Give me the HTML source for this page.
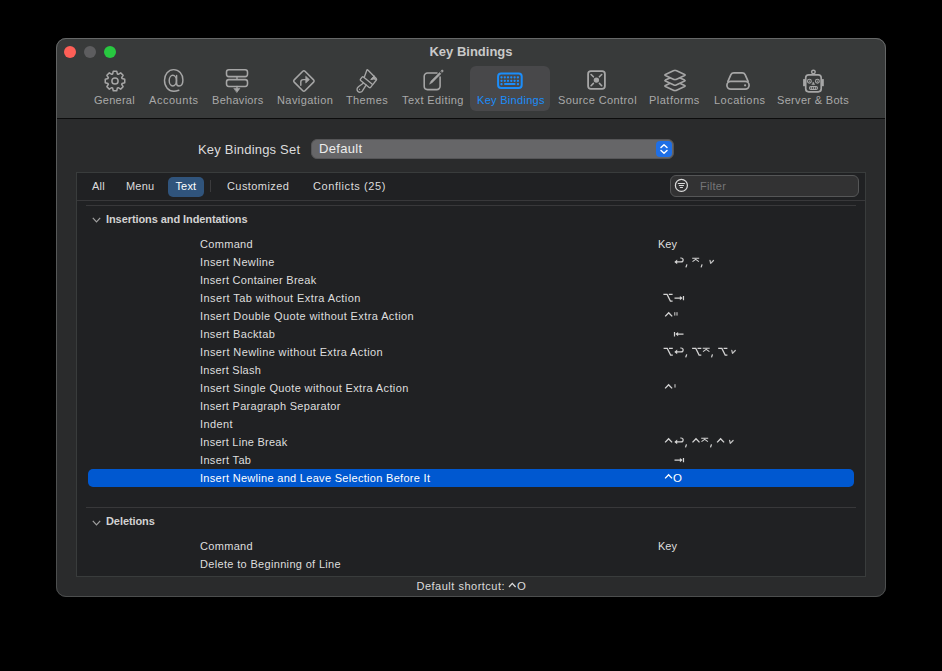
<!DOCTYPE html>
<html><head><meta charset="utf-8">
<style>
*{margin:0;padding:0;box-sizing:border-box}
html,body{width:942px;height:671px;background:#000;overflow:hidden;font-family:"Liberation Sans",sans-serif}
.a{position:absolute;white-space:nowrap}
#win{position:absolute;left:56px;top:38px;width:830px;height:559px;border-radius:10px;background:#2a2b2c;overflow:hidden}
#tb{position:absolute;left:56px;top:38px;width:830px;height:81px;background:#383a3a;border-bottom:1px solid #0c0c0c;border-radius:10px 10px 0 0}
#bord{position:absolute;left:56px;top:38px;width:830px;height:559px;border-radius:10px;border:1px solid #626464}
.lbl{position:absolute;top:94px;font-size:11px;color:#a9a9a9;letter-spacing:0.15px;line-height:13px;white-space:nowrap}
svg{position:absolute;overflow:visible}
.row{position:absolute;left:200px;font-size:11px;color:#dedede;letter-spacing:0.25px;line-height:13px;white-space:nowrap}
.key{position:absolute;font-size:11px;color:#dedede;line-height:13px;white-space:nowrap}
#box{position:absolute;left:76px;top:172px;width:790px;height:405px;background:#202123;border:1px solid #393c3c}
#list{position:absolute;left:77px;top:202px;width:788px;height:374px;overflow:hidden}
.hdr{position:absolute;left:106px;font-size:11px;font-weight:bold;letter-spacing:-0.08px;color:#d2d2d2;line-height:13px;white-space:nowrap}
.sep{position:absolute;height:1px;background:#38383a}
.seg{position:absolute;top:180px;font-size:11px;color:#dcdcdc;letter-spacing:0.2px;line-height:13px;white-space:nowrap}
</style></head><body>
<div id="win"></div>
<div id="tb"></div>
<svg style="left:0;top:0" width="942" height="671" viewBox="0 0 942 671"><defs><linearGradient id="bg1" x1="0" y1="38" x2="0" y2="597" gradientUnits="userSpaceOnUse"><stop offset="0" stop-color="#666868"/><stop offset="0.15" stop-color="#5a5c5c"/><stop offset="1" stop-color="#4c4e4e"/></linearGradient></defs><rect x="56.5" y="38.5" width="829" height="558" rx="9.5" fill="none" stroke="url(#bg1)" stroke-width="1"/></svg>

<!-- traffic lights -->
<div class="a" style="left:64px;top:46px;width:12px;height:12px;border-radius:6px;background:#fe5f57"></div>
<div class="a" style="left:84px;top:46px;width:12px;height:12px;border-radius:6px;background:#5d5d5f"></div>
<div class="a" style="left:104px;top:46px;width:12px;height:12px;border-radius:6px;background:#28c840"></div>
<div class="a" style="left:56px;top:44px;width:830px;text-align:center;font-size:13px;font-weight:bold;color:#c9c9c9;line-height:15px">Key Bindings</div>

<!-- selected tab bg -->
<div class="a" style="left:470px;top:66px;width:80px;height:45px;border-radius:6px;background:#48484a"></div>

<svg style="left:0;top:0" width="942" height="120" viewBox="0 0 942 120">
<g fill="none" stroke="#a6a6a6" stroke-width="1.35" stroke-linejoin="round" stroke-linecap="round">
<!-- gear -->
<path d="M112.59 74.00 L113.28 71.25 L116.72 71.25 L117.41 74.00 A7.4 7.4 0 0 1 118.24 74.35 L120.68 72.89 L123.11 75.32 L121.65 77.76 A7.4 7.4 0 0 1 122.00 78.59 L124.75 79.28 L124.75 82.72 L122.00 83.41 A7.4 7.4 0 0 1 121.65 84.24 L123.11 86.68 L120.68 89.11 L118.24 87.65 A7.4 7.4 0 0 1 117.41 88.00 L116.72 90.75 L113.28 90.75 L112.59 88.00 A7.4 7.4 0 0 1 111.76 87.65 L109.32 89.11 L106.89 86.68 L108.35 84.24 A7.4 7.4 0 0 1 108.00 83.41 L105.25 82.72 L105.25 79.28 L108.00 78.59 A7.4 7.4 0 0 1 108.35 77.76 L106.89 75.32 L109.32 72.89 L111.76 74.35 A7.4 7.4 0 0 1 112.59 74.00Z" stroke-width="1.5"/>
<circle cx="115" cy="81" r="3.1" stroke-width="1.5"/>
<!-- @ -->
<g transform="translate(160 67)" stroke-width="1.45">
<ellipse cx="12.8" cy="13.6" rx="3.6" ry="5.3"/>
<path d="M16.6 8.4 V16.2 C16.6 18.2 17.7 19 19 19 C21.3 19 22.9 16.8 22.9 13 C22.9 7 18.8 2.6 13.7 2.6 C8.3 2.6 4.5 7.3 4.5 13.3 C4.5 19.8 8.6 24.2 13.8 24.2 C15.8 24.2 17.3 23.8 18.8 23.3"/>
</g>
<!-- behaviors -->
<rect x="226.5" y="69.8" width="21" height="6.8" rx="2.3" stroke-width="1.55"/>
<rect x="226.5" y="79.6" width="21" height="6.8" rx="2.3" stroke-width="1.55"/>
<path d="M237 76.6 V79.4 M237 86.4 V89" stroke-width="1.4"/>
<path d="M234.2 88.4 L239.8 88.4 L237 92.2 Z" fill="#a6a6a6" stroke-width="0.7"/>
<!-- navigation -->
<path d="M302.8 71.3 Q303.9 70.2 305 71.3 L313.6 79.9 Q314.7 81 313.6 82.1 L305 90.7 Q303.9 91.8 302.8 90.7 L294.2 82.1 Q293.1 81 294.2 79.9 Z" stroke-width="1.55"/>
<path d="M300.8 85.3 V82 C300.8 80.5 301.8 79.6 303.2 79.6 H306.5" stroke-width="1.45"/>
<path d="M306 76.5 L309.4 79.6 L306 82.7 Z" fill="#a6a6a6" stroke-width="0.8"/>
<!-- themes brush -->
<g transform="translate(362.7 76.4) rotate(39)">
<rect x="0" y="0" width="13" height="4.5" rx="1"/>
<path d="M1.9 0 L-0.7 -7.4 Q-1 -8.4 0 -8.2 L11.8 -6.9 Q12.8 -6.8 12.9 -5.8 L13 0"/>
<path d="M8.6 -7.5 Q8.1 -4.3 8.3 -2.6 Q9.8 -5 12.4 -6.2" fill="#a6a6a6" stroke-width="0.9"/>
<path d="M4.5 4.5 V5.8 L3.2 10.8 A2.95 2.95 0 1 0 8.9 11.2 L8.2 5.8 V4.5"/>
<circle cx="5.7" cy="12" r="0.6" fill="#a6a6a6" stroke="none"/>
</g>
<!-- text editing -->
<path d="M437 73 H427.5 A3.3 3.3 0 0 0 424.2 76.3 V86.3 A3.3 3.3 0 0 0 427.5 89.6 H436.8 A3.3 3.3 0 0 0 440.1 86.3 V77" stroke-width="1.55"/>
<path d="M429.6 83.9 L431 81 L439.6 72.4 L441 73.8 L432.4 82.4 Z" fill="#a6a6a6" stroke-width="0.5"/>
<path d="M441 71 L442.2 69.8 L443.4 71 L442.2 72.2 Z" fill="#a6a6a6" stroke-width="0.6"/>
<!-- source control -->
<rect x="588.1" y="71.1" width="16.8" height="17.8" rx="2.8" stroke-width="1.8"/>
<circle cx="596.4" cy="80.1" r="2.7" fill="#a6a6a6" stroke="none"/>
<path d="M591.1 74.5 L593.4 76.8 M601.7 74.5 L599.4 76.8 M591.1 85.7 L593.4 83.4 M601.7 85.7 L599.4 83.4" stroke-width="1.6"/>
<!-- platforms -->
<path d="M673.9 81.60 Q675 81.05 676.1 81.60 L684.6 85.50 Q685.6 86.00 684.6 86.50 L676.1 90.40 Q675 90.95 673.9 90.40 L665.4 86.50 Q664.4 86.00 665.4 85.50 Z" fill="#38383a" stroke-width="1.6"/>
<path d="M673.9 76.20 Q675 75.65 676.1 76.20 L684.6 80.10 Q685.6 80.60 684.6 81.10 L676.1 85.00 Q675 85.55 673.9 85.00 L665.4 81.10 Q664.4 80.60 665.4 80.10 Z" fill="#38383a" stroke-width="1.6"/>
<path d="M673.9 70.60 Q675 70.05 676.1 70.60 L684.6 74.50 Q685.6 75.00 684.6 75.50 L676.1 79.40 Q675 79.95 673.9 79.40 L665.4 75.50 Q664.4 75.00 665.4 74.50 Z" fill="#38383a" stroke-width="1.6"/>
<!-- locations -->
<path d="M727.9 81.4 L730.9 74.7 Q731.8 72.8 733.8 72.8 H742.2 Q744.2 72.8 745.1 74.7 L748.1 81.4" stroke-width="1.7"/>
<rect x="726.9" y="81.4" width="22.2" height="7.8" rx="3.9" stroke-width="1.7"/>
<circle cx="745.1" cy="85.3" r="1.1" fill="#a6a6a6" stroke="none"/>
<!-- robot -->
<rect x="805.7" y="74.8" width="15.5" height="17" rx="3" stroke-width="1.7"/>
<circle cx="813.4" cy="72" r="1.8" stroke-width="1.4"/>
<rect x="803.1" y="79.1" width="1.9" height="7.1" fill="#a6a6a6" stroke="none"/>
<rect x="821.9" y="79.1" width="1.9" height="7.1" fill="#a6a6a6" stroke="none"/>
<circle cx="809.4" cy="81.2" r="1.9" stroke-width="1.1"/>
<circle cx="817.4" cy="81.2" r="1.9" stroke-width="1.1"/>
<circle cx="809.4" cy="81.2" r="0.6" fill="#a6a6a6" stroke="none"/>
<circle cx="817.4" cy="81.2" r="0.6" fill="#a6a6a6" stroke="none"/>
<path d="M813.4 82.3 L814.6 84.6 H812.2 Z" fill="#a6a6a6" stroke-width="0.6"/>
<rect x="809.5" y="86.6" width="8" height="2.8" rx="1.4" stroke-width="1.1"/>
<path d="M811.5 86.8 V89.2 M813.5 86.8 V89.2 M815.5 86.8 V89.2" stroke-width="0.8"/>
</g>
<!-- keyboard blue -->
<g fill="none" stroke="#1b8dfa" stroke-width="2">
<rect x="498.1" y="73.6" width="23.6" height="14.4" rx="3"/>
</g>
<g fill="#1b8dfa"><rect x="500.40" y="76.20" width="2.2" height="2.2" rx="0.8"/><rect x="503.70" y="76.20" width="2.2" height="2.2" rx="0.8"/><rect x="506.90" y="76.20" width="2.2" height="2.2" rx="0.8"/><rect x="510.20" y="76.20" width="2.2" height="2.2" rx="0.8"/><rect x="513.50" y="76.20" width="2.2" height="2.2" rx="0.8"/><rect x="516.80" y="76.20" width="2.2" height="2.2" rx="0.8"/><rect x="500.40" y="79.70" width="2.2" height="2.2" rx="0.8"/><rect x="503.70" y="79.70" width="2.2" height="2.2" rx="0.8"/><rect x="506.90" y="79.70" width="2.2" height="2.2" rx="0.8"/><rect x="510.20" y="79.70" width="2.2" height="2.2" rx="0.8"/><rect x="513.50" y="79.70" width="2.2" height="2.2" rx="0.8"/><rect x="516.80" y="79.70" width="2.2" height="2.2" rx="0.8"/><rect x="500.4" y="83.0" width="2.2" height="2.2" rx="0.8"/><rect x="504" y="83.1" width="11.6" height="2" rx="1"/><rect x="516.8" y="83.0" width="2.2" height="2.2" rx="0.8"/></g>
</svg>

<!-- toolbar labels -->
<div class="lbl" style="left:94px;letter-spacing:0.25px">General</div>
<div class="lbl" style="left:149px;letter-spacing:0.54px">Accounts</div>
<div class="lbl" style="left:212px;letter-spacing:0.29px">Behaviors</div>
<div class="lbl" style="left:277px;letter-spacing:0.43px">Navigation</div>
<div class="lbl" style="left:346px;letter-spacing:0.39px">Themes</div>
<div class="lbl" style="left:402px;letter-spacing:0.42px">Text Editing</div>
<div class="lbl" style="left:477px;color:#1b8dfa;letter-spacing:0.30px">Key Bindings</div>
<div class="lbl" style="left:558px;letter-spacing:0.40px">Source Control</div>
<div class="lbl" style="left:649px;letter-spacing:0.49px">Platforms</div>
<div class="lbl" style="left:714px;letter-spacing:0.49px">Locations</div>
<div class="lbl" style="left:777px;letter-spacing:0.32px">Server &amp; Bots</div>

<!-- popup -->
<div class="a" style="left:198px;top:142px;font-size:13px;color:#dcdcdc;letter-spacing:0.2px;line-height:15px">Key Bindings Set</div>
<div class="a" style="left:311px;top:139px;width:363px;height:20px;border-radius:6px;background:#666668;border:1px solid #555557"></div>
<div class="a" style="left:319px;top:141px;font-size:13px;color:#ececec;letter-spacing:0.3px;line-height:15px">Default</div>
<div class="a" style="left:656px;top:141px;width:16px;height:16px;border-radius:4px;background:#1f6fe6"></div>
<svg style="left:656px;top:141px" width="16" height="16" viewBox="0 0 16 16"><path d="M5 6.5 L8 3.8 L11 6.5 M5 9.5 L8 12.2 L11 9.5" fill="none" stroke="#fff" stroke-width="1.5" stroke-linecap="round" stroke-linejoin="round"/></svg>

<!-- table box -->
<div id="box"></div>
<div class="sep" style="left:77px;top:200px;width:788px;background:#38383a"></div>
<div class="seg" style="left:92px">All</div>
<div class="seg" style="left:126px">Menu</div>
<div class="a" style="left:168px;top:177px;width:36px;height:20px;border-radius:5px;background:#30547c"></div>
<div class="seg" style="left:175.4px;color:#ffffff">Text</div>
<div class="a" style="left:210px;top:180px;width:1px;height:12px;background:#3b3b3d"></div>
<div class="seg" style="left:227px;letter-spacing:0.42px">Customized</div>
<div class="seg" style="left:313px;letter-spacing:0.58px">Conflicts (25)</div>
<div class="a" style="left:670px;top:175px;width:189px;height:22px;border-radius:6px;background:#323233;border:1px solid #555657"></div>
<svg style="left:0;top:0" width="942" height="671" viewBox="0 0 942 671"><circle cx="681.4" cy="185.4" r="6" fill="none" stroke="#dadada" stroke-width="1.25"/><path d="M678.3 183.5 H684.5 M679.3 185.5 H683.5 M680.3 187.5 H682.5" stroke="#dadada" stroke-width="1.15" stroke-linecap="round"/></svg>
<div class="a" style="left:700px;top:180px;font-size:11px;color:#767678;letter-spacing:0.3px;line-height:13px">Filter</div>

<div id="list">
</div>
<!-- list content in page coords -->
<div class="sep" style="left:86px;top:205px;width:770px"></div>
<svg style="left:92px;top:217px" width="9" height="6" viewBox="0 0 9 6"><path d="M0.8 0.8 L4.5 4.8 L8.2 0.8" fill="none" stroke="#a0a0a0" stroke-width="1.2"/></svg>
<div class="hdr" style="top:213px">Insertions and Indentations</div>

<div class="row" style="top:238px;letter-spacing:0.32px">Command</div>
<div class="key" style="left:658px;top:238px">Key</div>
<div class="row" style="top:256px;letter-spacing:0.36px">Insert Newline</div>
<div class="row" style="top:274px;letter-spacing:0.29px">Insert Container Break</div>
<div class="row" style="top:292px;letter-spacing:0.42px">Insert Tab without Extra Action</div>
<div class="row" style="top:310px;letter-spacing:0.40px">Insert Double Quote without Extra Action</div>
<div class="row" style="top:328px;letter-spacing:0.35px">Insert Backtab</div>
<div class="row" style="top:346px;letter-spacing:0.39px">Insert Newline without Extra Action</div>
<div class="row" style="top:364px;letter-spacing:0.25px">Insert Slash</div>
<div class="row" style="top:382px;letter-spacing:0.37px">Insert Single Quote without Extra Action</div>
<div class="row" style="top:400px;letter-spacing:0.28px">Insert Paragraph Separator</div>
<div class="row" style="top:418px;letter-spacing:0.41px">Indent</div>
<div class="row" style="top:436px;letter-spacing:0.25px">Insert Line Break</div>
<div class="row" style="top:454px;letter-spacing:0.32px">Insert Tab</div>
<div class="a" style="left:88px;top:469px;width:766px;height:18px;border-radius:5px;background:#0058d0"></div>
<div class="row" style="top:472px;color:#fff;letter-spacing:0.30px">Insert Newline and Leave Selection Before It</div>
<div class="key" style="left:673px;top:472px;color:#fff;font-size:11.5px">O</div>

<!-- KEYS --><svg style="left:0;top:0" width="942" height="671" viewBox="0 0 942 671">
<path d="M676.50 261.90 H680.90 C683.90 261.90 683.90 258.00 680.90 258.00 H680.30" fill="none" stroke="#d4d4d4" stroke-width="1.2"/><path d="M674.30 261.90 L677.20 259.50 V264.30 Z" fill="#d4d4d4"/>
<path d="M686.90 264.40 L685.90 267.40" fill="none" stroke="#d4d4d4" stroke-width="1.25"/>
<path d="M692.20 258.30 H699.20 M692.50 261.60 L695.70 259.40 L698.90 261.60" fill="none" stroke="#d4d4d4" stroke-width="1.1"/>
<path d="M702.10 264.40 L701.10 267.40" fill="none" stroke="#d4d4d4" stroke-width="1.25"/>
<path d="M710.00 260.40 L710.70 263.40 L713.50 260.50" fill="none" stroke="#c0c0c0" stroke-width="1.25" stroke-linecap="round" stroke-linejoin="round"/>
<path d="M663.40 294.40 H667.10 L670.40 301.00 H672.60 M668.80 294.40 H672.60" fill="none" stroke="#d4d4d4" stroke-width="1.25"/>
<path d="M674.50 298.10 H680.80 M683.50 296.00 V300.30" fill="none" stroke="#d4d4d4" stroke-width="1.2"/><path d="M682.70 298.10 L679.90 296.00 V300.20 Z" fill="#d4d4d4"/>
<path d="M665.20 316.40 L668.70 312.80 L672.20 316.40" fill="none" stroke="#d4d4d4" stroke-width="1.35"/>
<path d="M674.80 312.20 V315.60 M677.00 312.20 V315.60" fill="none" stroke="#d4d4d4" stroke-width="1.0"/>
<path d="M683.50 334.10 H677.20 M674.50 331.90 V336.40" fill="none" stroke="#d4d4d4" stroke-width="1.2"/><path d="M675.30 334.10 L678.10 332.00 V336.20 Z" fill="#d4d4d4"/>
<path d="M663.60 348.40 H667.30 L670.60 355.00 H672.80 M669.00 348.40 H672.80" fill="none" stroke="#d4d4d4" stroke-width="1.25"/>
<path d="M676.50 351.90 H680.90 C683.90 351.90 683.90 348.00 680.90 348.00 H680.30" fill="none" stroke="#d4d4d4" stroke-width="1.2"/><path d="M674.30 351.90 L677.20 349.50 V354.30 Z" fill="#d4d4d4"/>
<path d="M686.70 354.40 L685.70 357.40" fill="none" stroke="#d4d4d4" stroke-width="1.25"/>
<path d="M692.10 348.40 H695.80 L699.10 355.00 H701.30 M697.50 348.40 H701.30" fill="none" stroke="#d4d4d4" stroke-width="1.25"/>
<path d="M702.70 348.30 H709.70 M703.00 351.60 L706.20 349.40 L709.40 351.60" fill="none" stroke="#d4d4d4" stroke-width="1.1"/>
<path d="M712.50 354.40 L711.50 357.40" fill="none" stroke="#d4d4d4" stroke-width="1.25"/>
<path d="M718.20 348.40 H721.90 L725.20 355.00 H727.40 M723.60 348.40 H727.40" fill="none" stroke="#d4d4d4" stroke-width="1.25"/>
<path d="M731.80 350.40 L732.50 353.40 L735.30 350.50" fill="none" stroke="#c0c0c0" stroke-width="1.25" stroke-linecap="round" stroke-linejoin="round"/>
<path d="M665.10 388.40 L668.60 384.80 L672.10 388.40" fill="none" stroke="#d4d4d4" stroke-width="1.35"/>
<path d="M675.00 384.20 V387.60" fill="none" stroke="#d4d4d4" stroke-width="1.0"/>
<path d="M665.10 442.40 L668.60 438.80 L672.10 442.40" fill="none" stroke="#d4d4d4" stroke-width="1.35"/>
<path d="M676.50 441.90 H680.90 C683.90 441.90 683.90 438.00 680.90 438.00 H680.30" fill="none" stroke="#d4d4d4" stroke-width="1.2"/><path d="M674.30 441.90 L677.20 439.50 V444.30 Z" fill="#d4d4d4"/>
<path d="M686.50 444.40 L685.50 447.40" fill="none" stroke="#d4d4d4" stroke-width="1.25"/>
<path d="M692.50 442.40 L696.00 438.80 L699.50 442.40" fill="none" stroke="#d4d4d4" stroke-width="1.35"/>
<path d="M701.20 438.30 H708.20 M701.50 441.60 L704.70 439.40 L707.90 441.60" fill="none" stroke="#d4d4d4" stroke-width="1.1"/>
<path d="M711.50 444.40 L710.50 447.40" fill="none" stroke="#d4d4d4" stroke-width="1.25"/>
<path d="M717.10 442.40 L720.60 438.80 L724.10 442.40" fill="none" stroke="#d4d4d4" stroke-width="1.35"/>
<path d="M729.60 440.40 L730.30 443.40 L733.10 440.50" fill="none" stroke="#c0c0c0" stroke-width="1.25" stroke-linecap="round" stroke-linejoin="round"/>
<path d="M674.50 460.10 H680.80 M683.50 458.00 V462.30" fill="none" stroke="#d4d4d4" stroke-width="1.2"/><path d="M682.70 460.10 L679.90 458.00 V462.20 Z" fill="#d4d4d4"/>
<path d="M665.10 478.40 L668.60 474.80 L672.10 478.40" fill="none" stroke="#ffffff" stroke-width="1.35"/>
</svg><!-- /KEYS -->
<div class="sep" style="left:86px;top:507px;width:770px"></div>
<svg style="left:92px;top:520px" width="9" height="6" viewBox="0 0 9 6"><path d="M0.8 0.8 L4.5 4.8 L8.2 0.8" fill="none" stroke="#a0a0a0" stroke-width="1.2"/></svg>
<div class="hdr" style="top:515px">Deletions</div>
<div class="row" style="top:540px;letter-spacing:0.32px">Command</div>
<div class="key" style="left:658px;top:540px">Key</div>
<div class="row" style="top:558px;letter-spacing:0.33px">Delete to Beginning of Line</div>

<div class="a" style="left:416.5px;top:580px;font-size:11px;color:#dcdcdc;letter-spacing:0.5px;line-height:13px">Default shortcut:</div>
<svg style="left:0;top:0" width="942" height="671" viewBox="0 0 942 671"><path d="M509 587 L512.3 583.4 L515.6 587" fill="none" stroke="#dcdcdc" stroke-width="1.3"/></svg>
<div class="a" style="left:517px;top:580px;font-size:11.4px;color:#dcdcdc;line-height:13px">O</div>
</body></html>
